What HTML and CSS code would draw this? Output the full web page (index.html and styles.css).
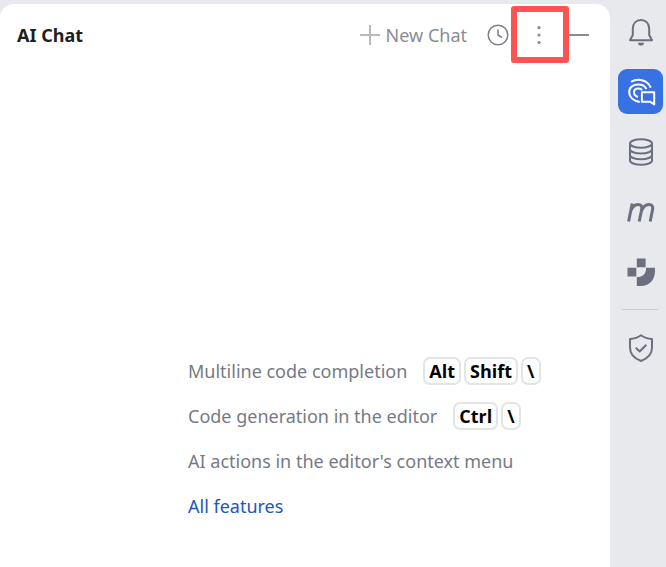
FILE: index.html
```html
<!DOCTYPE html>
<html lang="en">
<head>
<meta charset="utf-8">
<title>AI Chat</title>
<link rel="stylesheet" href="styles.css">
</head>
<body>
<div class="window">
  <main class="panel">
    <header class="panel-header">
      <h1 class="title">AI Chat</h1>
      <div class="actions">
        <button class="action new-chat" type="button">
          <svg class="plus" width="20" height="20" viewBox="0 0 20 20" aria-hidden="true"><path d="M10 0v20M0 10h20"/></svg>
          <span>New Chat</span>
        </button>
        <button class="action" type="button" aria-label="Chat history">
          <svg class="clock" width="22" height="22" viewBox="0 0 22 22" aria-hidden="true"><circle cx="11" cy="11" r="9.8"/><path d="M11 5.500V11l4 2.500"/></svg>
        </button>
        <button class="action more" type="button" aria-label="More options">
          <svg class="dots" width="20" height="20" viewBox="0 0 20 20" aria-hidden="true"><circle cx="10" cy="2.700" r="1.600"/><circle cx="10" cy="10" r="1.600"/><circle cx="10" cy="17.500" r="1.600"/></svg>
        </button>
        <button class="action" type="button" aria-label="Hide">
          <svg width="20" height="20" viewBox="0 0 20 20" aria-hidden="true"><path d="M0 10h20"/></svg>
        </button>
      </div>
    </header>
    <section class="hints">
      <p class="hint">Multiline code completion <span class="keys"><kbd>Alt</kbd><kbd>Shift</kbd><kbd>\</kbd></span></p>
      <p class="hint">Code generation in the editor <span class="keys"><kbd>Ctrl</kbd><kbd>\</kbd></span></p>
      <p class="hint">AI actions in the editor's context menu</p>
      <p class="hint"><a href="#">All features</a></p>
    </section>
  </main>
  <nav class="toolbar">
    <button class="tool" type="button" aria-label="Notifications">
      <svg width="30" height="30" viewBox="0 0 30 30" aria-hidden="true"><path d="M4 23.200h22L23.200 18v-6.200C23.200 6.400 19.800 3 15 3S6.800 6.400 6.800 11.800V18z"/><path class="solid" d="M12 25.800h6a3 2.800 0 0 1-6 0z"/></svg>
    </button>
    <button class="tool active" type="button" aria-label="AI Chat">
      <svg width="30" height="30" viewBox="0 0 30 30" aria-hidden="true"><path d="M5 4.800C11.500 1.200 21 2.200 24.800 10.600M13.800 25C7.500 23.800 3.200 20 3.200 15c0-5 4.300-7.500 8.800-7.500 4.500 0 7.400 2.100 8.300 4.700M12 20C9.500 19.200 8 17.500 8 15.300c0-2.500 2-3.700 4.300-3.700 2 0 3.200.6 3.800 1.700"/><path d="M15.900 15.200h12.300v12.200l-3.800-2.600h-8.500z"/></svg>
    </button>
    <button class="tool" type="button" aria-label="Database">
      <svg width="30" height="30" viewBox="0 0 30 30" aria-hidden="true"><ellipse cx="15" cy="6.500" rx="11" ry="4.300"/><path d="M4 6.500v17c0 2.400 4.900 4.300 11 4.300s11-1.900 11-4.300v-17M4 12.200c0 2.400 4.900 4.300 11 4.300s11-1.900 11-4.300M4 17.900c0 2.400 4.900 4.300 11 4.300s11-1.900 11-4.300"/></svg>
    </button>
    <button class="tool" type="button" aria-label="Maven">
      <svg width="30" height="30" viewBox="0 0 30 30" aria-hidden="true"><path class="maven" d="M6.200 6.500 2.600 24.500M4.500 14.500C6.200 9.800 9 7.500 12 7.500c3 0 4.300 1.800 3.700 4.800L13.200 24.500M15.200 14.500c1.800-4.700 4.600-7 7.600-7s4.400 1.800 3.800 4.800L24.200 24.500"/></svg>
    </button>
    <button class="tool" type="button" aria-label="Extensions">
      <svg width="30" height="30" viewBox="0 0 30 30" aria-hidden="true"><path class="solid" d="M10.800 1.500h8.800v8.800h-8.800zM1.500 10.800h8.800v8.800H1.500zM20.100 10.800H29v3.200c0 9.500-6 15-14.500 15h-3.700v-8.900c6.200 0 9.300-3 9.300-9.300z"/></svg>
    </button>
    <hr class="divider">
    <button class="tool" type="button" aria-label="Security">
      <svg width="30" height="30" viewBox="0 0 30 30" aria-hidden="true"><path d="M15 2.300c3 2.300 6.800 3.500 11 3.700v8.500c0 6.500-4.500 11-11 13.500C8.500 25.500 4 21 4 14.500V6c4.200-.2 8-1.400 11-3.700z"/><path d="m9.700 14.800 4 3.700 6.600-6.700"/></svg>
    </button>
  </nav>
</div>
</body>
</html>
```

FILE: styles.css
```css
* {
  box-sizing: border-box;
}

body {
  margin: 0;
  background: #e8e9ed;
  color: #767a85;
  font: 18px/24px "Noto Sans", "Open Sans", sans-serif;
}

.window {
  display: flex;
  min-height: 100vh;
}

.panel {
  flex: 1;
  margin-top: 4px;
  background: #fff;
  border-radius: 14px 14px 0 0;
}

.panel-header {
  display: flex;
  align-items: center;
  justify-content: space-between;
  height: 62px;
  padding: 0 21px 0 17px;
}

.title {
  margin: 0;
  color: #1e1f22;
  font-size: 18px;
  font-weight: 700;
}

.actions {
  display: flex;
  align-items: center;
  gap: 20px;
}

.action {
  display: flex;
  align-items: center;
  padding: 0;
  border: 0;
  background: none;
  color: #8a8c94;
  font: inherit;
}

.new-chat {
  gap: 6px;
}

svg {
  fill: none;
  stroke: currentColor;
  stroke-width: 2;
  stroke-linejoin: round;
}

.plus {
  color: #b9bac0;
}

.clock {
  color: #7d808c;
  stroke-width: 1.5;
}

.dots,
.solid {
  fill: currentColor;
  stroke: none;
}

.more {
  position: relative;
}

.more::after {
  content: "";
  position: absolute;
  inset: -19px -20px -18px -18px;
  border: 6px solid #ff5252;
  border-radius: 3px;
}

.hints {
  display: flex;
  flex-direction: column;
  gap: 17px;
  margin-top: 291px;
  padding-left: 188px;
}

.hint {
  display: flex;
  align-items: center;
  gap: 16px;
  height: 28px;
  margin: 0;
  white-space: nowrap;
}

.keys {
  display: flex;
  gap: 3px;
}

kbd {
  height: 28px;
  padding: 0 4px;
  border: 2px solid #e3e4e8;
  border-radius: 7px;
  color: #000;
  font: 700 18px/24px "Open Sans", "Noto Sans", sans-serif;
}

a {
  color: #2456b5;
  text-decoration: none;
}

.toolbar {
  display: flex;
  flex-direction: column;
  gap: 15px;
  width: 56px;
  padding: 9px 3px 0 8px;
}

.tool {
  display: flex;
  align-items: center;
  justify-content: center;
  height: 45px;
  padding: 0;
  border: 0;
  border-radius: 9px;
  background: none;
  color: #6c707e;
}

.active {
  background: #3871e1;
  color: #fff;
}

.maven {
  stroke-width: 3;
}

.divider {
  width: 36px;
  margin: 0 4px;
  border: 0;
  border-top: 1px solid #c9ccd6;
}
```
